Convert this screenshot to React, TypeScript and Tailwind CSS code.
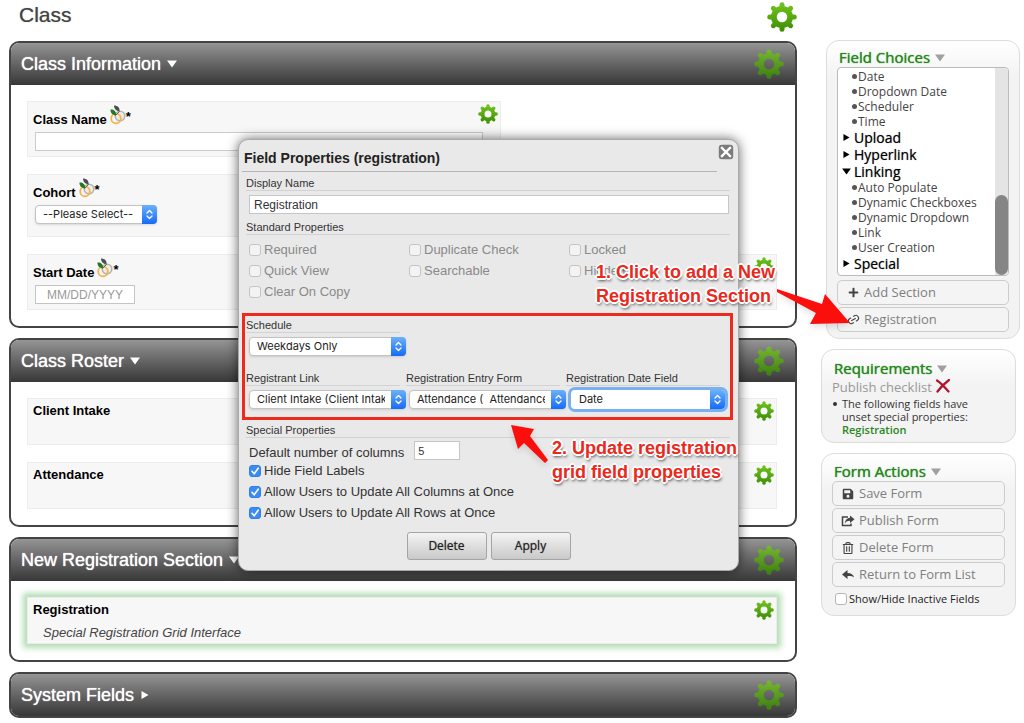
import type { ReactNode } from "react";
import { FaPlus, FaRegTrashAlt, FaSave } from "react-icons/fa";
import { Link2 } from "lucide-react";

const TEETH = [0, 45, 90, 135, 180, 225, 270, 315];

function Gear({ className }: { className: string }) {
  return (
    <svg viewBox="0 0 24 24" className={className} aria-hidden="true">
      <defs>
        <linearGradient id="gear" gradientUnits="userSpaceOnUse" x1="0" y1="2" x2="0" y2="22">
          <stop offset="0" stopColor="#6fc11a" />
          <stop offset="1" stopColor="#3f9106" />
        </linearGradient>
        <mask id="teeth" maskUnits="userSpaceOnUse" x="0" y="0" width="24" height="24">
          <circle cx="12" cy="12" r="6.5" fill="none" stroke="#fff" strokeWidth="4.6" />
          {TEETH.map((a) => (
            <path
              key={a}
              d="M12 5V2.2"
              stroke="#fff"
              strokeWidth="4"
              strokeLinecap="round"
              transform={`rotate(${a} 12 12)`}
            />
          ))}
        </mask>
      </defs>
      <rect width="24" height="24" fill="url(#gear)" mask="url(#teeth)" />
    </svg>
  );
}

function GearButton({ label, className, size }: { label: string; className?: string; size: string }) {
  return (
    <button type="button" aria-label={label} className={className}>
      <Gear className={size} />
    </button>
  );
}

function RingMark() {
  return (
    <svg viewBox="0 0 16 20" className="h-5 w-4 shrink-0" aria-hidden="true">
      <circle cx="10" cy="11" r="4.8" fill="#ecece8" stroke="#b4b4ae" strokeWidth="1.6" />
      <circle cx="6" cy="13.5" r="4.8" fill="none" stroke="#f5b34e" strokeWidth="1.8" />
      <path d="M0.5 4.500C4 4 6.500 6.500 6 10.500C2.500 10 0.200 8 0.5 4.500Z" fill="#1e7a25" />
      <path d="M4 0.500C7.500 0.500 10 2.500 9.500 6.500C6.500 6 4 4 4 0.500Z" fill="#4c4c55" />
      <path d="M5.500 10.500L9.500 6.500" stroke="#555" strokeWidth="0.9" />
    </svg>
  );
}

function ShareIcon() {
  return (
    <svg viewBox="0 0 14 12" className="h-3 w-[14px]" aria-hidden="true">
      <path d="M7 2H1.500V10.500H10V8.500" fill="none" stroke="currentColor" strokeWidth="1.5" />
      <path d="M9 0.500L13.500 4.200L9 8V5.800C6.500 5.800 5 6.500 3.800 8.500C4 5 6 2.900 9 2.700Z" fill="currentColor" />
    </svg>
  );
}

function BackIcon() {
  return (
    <svg viewBox="0 0 14 12" className="h-3 w-[14px]" aria-hidden="true">
      <path d="M6.500 1L1 5.500L6.500 10V7C9.500 6.800 11.500 7.200 13 8.500C12.500 5.500 10 4 6.500 4Z" fill="currentColor" />
    </svg>
  );
}

function Triangle({ dir, className }: { dir: "down" | "right"; className: string }) {
  return (
    <svg viewBox="0 0 10 8" className={className} aria-hidden="true">
      <path d={dir === "down" ? "M0 0.500H10L5 7.500Z" : "M1.500 0L8.500 4L1.500 8Z"} fill="currentColor" />
    </svg>
  );
}

function Section({ title, open = true, children }: { title: string; open?: boolean; children?: ReactNode }) {
  return (
    <section className="overflow-hidden rounded-[10px] border-2 border-[#444] bg-white">
      <header className="flex h-[42px] items-center justify-between bg-linear-to-b from-[#959595] to-[#383838] pr-[11px] pl-[10px]">
        <h2 className="flex items-center gap-[5px] text-lg text-white [text-shadow:0_0_1px_#fff]">
          {title}
          <Triangle dir={open ? "down" : "right"} className="h-2 w-3" />
        </h2>
        <GearButton label={`${title} settings`} size="size-[30px] opacity-80" />
      </header>
      {children && <div className="flex flex-col gap-[17px] py-4 pr-[18px] pl-4">{children}</div>}
    </section>
  );
}

function FieldCard({ title, className, children }: { title: ReactNode; className: string; children?: ReactNode }) {
  return (
    <div className={`flex items-start justify-between border border-[#ececec] bg-[#f7f7f7] px-[5px] ${className}`}>
      <div className="flex min-w-0 flex-1 flex-col">
        {title}
        {children}
      </div>
      <GearButton label="Field settings" className="mt-[2px] -mr-[3px]" size="size-5" />
    </div>
  );
}

function RequiredLabel({ htmlFor, children }: { htmlFor: string; children: string }) {
  return (
    <label htmlFor={htmlFor} className="flex h-[30px] items-start gap-[3px] text-[13px] font-bold text-black">
      <span className="mt-2">{children}</span>
      <span className="mt-[3px] flex">
        <RingMark />
        <span className="mt-[2px]">*</span>
      </span>
    </label>
  );
}

function Select({ id, value, className, focused }: { id: string; value: string; className: string; focused?: boolean }) {
  return (
    <div className={`relative font-['Inter',sans-serif] text-[11px] text-[#222] ${className}`}>
      <select
        id={id}
        className={
          focused
            ? "block h-[19px] w-full appearance-none rounded-[4px] bg-white pr-4 pl-2 ring-3 ring-[#79b0f0] outline-none"
            : "block h-[19px] w-full appearance-none rounded-[4px] border border-[#c3c3c3] bg-white pr-5 pl-[7px] shadow-sm"
        }
      >
        <option>{value}</option>
      </select>
      <svg viewBox="0 0 15 19" className="pointer-events-none absolute top-0 right-0 h-[19px] w-[15px]" aria-hidden="true">
        <defs>
          <linearGradient id="stepper" x1="0" y1="0" x2="0" y2="1">
            <stop offset="0" stopColor="#6bb1fa" />
            <stop offset="1" stopColor="#156bf5" />
          </linearGradient>
        </defs>
        <path d="M0 0H11A4 4 0 0 1 15 4V15A4 4 0 0 1 11 19H0Z" fill="url(#stepper)" />
        <path d="M5 8L7.500 5.500L10 8M5 11L7.500 13.500L10 11" fill="none" stroke="#fff" strokeWidth="1.3" strokeLinecap="round" strokeLinejoin="round" />
      </svg>
    </div>
  );
}

function Group({ title, htmlFor }: { title: string; htmlFor?: string }) {
  const className = "block h-[14px] border-b border-[#d2d2d2] text-[11px] leading-[13px] whitespace-nowrap text-[#333]";
  return htmlFor ? (
    <label htmlFor={htmlFor} className={className}>{title}</label>
  ) : (
    <h3 className={className}>{title}</h3>
  );
}

function Check({ label, checked }: { label: string; checked?: boolean }) {
  return (
    <label className={checked ? "flex h-[21px] items-center gap-[3px] text-[13px] text-[#333]" : "flex h-[21px] items-center gap-[3px] text-[13px] text-[#8a8a8a]"}>
      <span className="relative flex">
        <input
          type="checkbox"
          defaultChecked={checked}
          disabled={!checked}
          className="size-3 appearance-none rounded-[3px] border border-[#c4c4c4] bg-[#f3f3f3] checked:border-[#2f7fe8] checked:bg-[#3b8bf2]"
        />
        {checked && (
          <svg viewBox="0 0 12 12" className="pointer-events-none absolute inset-0 size-3" aria-hidden="true">
            <path d="M3 6.300L5.200 8.800L9.200 3.200" fill="none" stroke="#fff" strokeWidth="1.6" strokeLinecap="round" />
          </svg>
        )}
      </span>
      {label}
    </label>
  );
}

function FieldPropertiesDialog() {
  const button =
    "h-7 w-20 rounded-[3px] border border-[#a5a5a5] bg-linear-to-b from-[#f4f4f4] to-[#c9c9c9] font-['Open_Sans',sans-serif] text-[12px] text-[#222] [text-shadow:0_0_1px_#666]";
  return (
    <div
      role="dialog"
      aria-labelledby="dialog-title"
      className="absolute top-[139px] left-[238px] w-[501px] rounded-[10px] border border-[#a9a9a9] bg-[#e9e9e9] px-[3px] pb-[10px] shadow-[0_0_12px_rgba(0,0,0,0.6)]"
    >
      <header className="flex h-8 items-start justify-between">
        <h2 id="dialog-title" className="mr-[18px] h-8 w-full border-b border-[#b5b5b5] pt-2 pl-[2px] text-[14px] font-bold text-[#222]">
          Field Properties (registration)
        </h2>
        <button type="button" aria-label="Close" className="absolute top-1 right-1">
          <svg viewBox="0 0 16 16" className="size-4">
            <rect x="0.800" y="0.800" width="14.400" height="14.400" rx="3" fill="#7b7b7b" />
            <path d="M4 4L12 12M12 4L4 12" stroke="#fff" strokeWidth="2.400" strokeLinecap="square" />
          </svg>
        </button>
      </header>

      <div className="mt-[5px] pr-[5px] pl-1">
        <Group title="Display Name" htmlFor="display-name" />
        <input
          id="display-name"
          defaultValue="Registration"
          className="mt-1 ml-[3px] block h-[19px] w-[480px] border border-[#c6c6c6] bg-white px-1 text-[12px] text-[#333]"
        />
        <div className="mt-[7px]">
          <Group title="Standard Properties" />
        </div>
        <div className="mt-1 grid grid-cols-[160px_160px_160px] pl-[3px]">
          <Check label="Required" />
          <Check label="Duplicate Check" />
          <Check label="Locked" />
          <Check label="Quick View" />
          <Check label="Searchable" />
          <Check label="Hidden" />
          <Check label="Clear On Copy" />
        </div>
      </div>

      <div className="mt-[11px] mr-[2px] h-[107px] border-3 border-[#ee2a1d] pt-[3px] pl-px">
        <div className="w-[154px]">
          <Group title="Schedule" htmlFor="schedule" />
        </div>
        <Select id="schedule" value="Weekdays Only" className="mt-1 ml-[3px] w-[157px]" />
        <div className="mt-4 grid grid-cols-[160px_160px_160px]">
          <div>
            <div className="w-[154px]"><Group title="Registrant Link" htmlFor="registrant-link" /></div>
            <Select id="registrant-link" value="Client Intake (Client Intake)" className="mt-1 ml-[3px] w-[157px]" />
          </div>
          <div>
            <div className="w-[154px]"><Group title="Registration Entry Form" htmlFor="entry-form" /></div>
            <Select id="entry-form" value={"Attendance (\u00a0 Attendance)"} className="mt-1 ml-[3px] w-[157px]" />
          </div>
          <div>
            <div className="w-[154px]"><Group title="Registration Date Field" htmlFor="date-field" /></div>
            <Select id="date-field" value="Date" focused className="mt-1 ml-[5px] w-[154px]" />
          </div>
        </div>
      </div>

      <div className="mt-1 pr-[5px] pl-1">
        <Group title="Special Properties" />
        <div className="mt-[3px] flex h-[19px] items-start gap-[10px] pl-[3px] text-[13px] text-[#333]">
          <label htmlFor="columns" className="mt-[2px]">Default number of columns</label>
          <input id="columns" defaultValue="5" className="h-[19px] w-[46px] border border-[#c6c6c6] bg-white px-[3px] text-[11px]" />
        </div>
        <div className="pl-[3px]">
          <Check label="Hide Field Labels" checked />
          <Check label="Allow Users to Update All Columns at Once" checked />
          <Check label="Allow Users to Update All Rows at Once" checked />
        </div>
      </div>
      <div className="mt-[9px] flex justify-center gap-1">
        <button type="button" className={button}>Delete</button>
        <button type="button" className={button}>Apply</button>
      </div>
    </div>
  );
}

function Note({ className, children }: { className: string; children: ReactNode }) {
  return (
    <p
      className={`absolute text-[18px] leading-6 font-bold whitespace-nowrap text-[#e8291c] [text-shadow:1px_1px_0_#fff,-1px_-1px_0_#fff,1px_-1px_0_#fff,-1px_1px_0_#fff,2px_0_0_#fff,-2px_0_0_#fff,0_2px_0_#fff,0_-2px_0_#fff,1px_3px_3px_rgba(0,0,0,0.7)] ${className}`}
    >
      {children}
    </p>
  );
}

function Panel({ title, className, children }: { title: string; className: string; children: ReactNode }) {
  return (
    <section className={`rounded-[13px] border border-[#dcdcd8] bg-linear-to-b from-white to-[#f3f3f3] to-[36px] px-[10px] ${className}`}>
      <h2 className="flex h-[19px] items-center gap-1 pl-[2px] text-[15px] text-[#27861d] [text-shadow:0_0_1px_#27861d]">
        {title}
        <Triangle dir="down" className="h-2 w-3 text-[#a0a0a0]" />
      </h2>
      {children}
    </section>
  );
}

function PanelButton({ icon, children }: { icon: ReactNode; children: string }) {
  return (
    <button
      type="button"
      className="flex h-[25px] w-full items-center gap-1 rounded-[5px] border border-[#ccc] bg-[#f4f4f4] pl-2 text-[13px] text-[#808080] [&_svg]:text-[#444]"
    >
      <span className="flex w-[14px] justify-center">{icon}</span>
      {children}
    </button>
  );
}

function Choice({ children }: { children: string }) {
  return (
    <li className="flex h-[15px] items-center text-[12px] leading-[15px] text-[#444]">
      <span className="mr-px size-[5px] rounded-full bg-[#555]" />
      {children}
    </li>
  );
}

function Category({ title, open, items = [] }: { title?: string; open?: boolean; items?: string[] }) {
  return (
    <li>
      {title && (
        <div className="flex h-[17px] items-center gap-[3px] pl-1 text-[14px] leading-[17px] text-black [text-shadow:0_0_1px_#777]">
          <Triangle dir={open ? "down" : "right"} className="h-[7px] w-[9px]" />
          {title}
        </div>
      )}
      <ul className="pl-[14px]">
        {items.map((item) => (
          <Choice key={item}>{item}</Choice>
        ))}
      </ul>
    </li>
  );
}

function Sidebar() {
  return (
    <aside className="flex w-[199px] shrink-0 flex-col gap-[10px] pt-10 font-['Open_Sans',sans-serif]">
      <Panel title="Field Choices" className="ml-[5px] pt-[7px] pb-[6px]">
        <div className="mb-1 flex overflow-hidden rounded-[4px] border border-[#bbb] bg-white">
          <ul className="flex-1 pt-px pb-[3px]">
            <Category items={["Date", "Dropdown Date", "Scheduler", "Time"]} />
            <Category title="Upload" />
            <Category title="Hyperlink" />
            <Category
              title="Linking"
              open
              items={["Auto Populate", "Dynamic Checkboxes", "Dynamic Dropdown", "Link", "User Creation"]}
            />
            <Category title="Special" />
          </ul>
          <div className="flex w-[13px] flex-col justify-end bg-[#e4e4e4]">
            <div className="h-20 rounded-full bg-[#858585]" />
          </div>
        </div>
        <div className="flex flex-col gap-[2px]">
          <PanelButton icon={<FaPlus size={11} />}>Add Section</PanelButton>
          <PanelButton icon={<Link2 size={13} strokeWidth={2} className="-rotate-30" />}>Registration</PanelButton>
        </div>
      </Panel>

      <Panel title="Requirements" className="mr-1 pt-[9px] pb-[6px]">
        <p className="flex h-[19px] items-center gap-1 text-[13px] text-[#999]">
          Publish checklist
          <svg viewBox="0 0 14 14" className="mb-1 size-[14px]" aria-hidden="true">
            <path d="M1 1.500C5 4 9 8.500 12.500 12.500M13 1C9 4 4 9 1.500 12.500" fill="none" stroke="#b3122c" strokeWidth="2.200" strokeLinecap="round" />
          </svg>
        </p>
        <ul className="pr-4 text-[11px] leading-[13px] text-[#333]">
          <li className="flex gap-[5px] pl-px">
            <span className="mt-[5px] size-1 shrink-0 rounded-full bg-[#333]" />
            <span>
              The following fields have unset special properties:{" "}
              <a href="#registration" className="block font-semibold text-[#27861d]">Registration</a>
            </span>
          </li>
        </ul>
      </Panel>

      <Panel title="Form Actions" className="mr-1 pt-2 pb-2">
        <div className="flex flex-col gap-[2px]">
          <PanelButton icon={<FaSave size={12} />}>Save Form</PanelButton>
          <PanelButton icon={<ShareIcon />}>Publish Form</PanelButton>
          <PanelButton icon={<FaRegTrashAlt size={12} />}>Delete Form</PanelButton>
          <PanelButton icon={<BackIcon />}>Return to Form List</PanelButton>
        </div>
        <label className="mt-1 flex h-4 items-center gap-[2px] pl-[3px] text-[11px] text-[#222]">
          <input type="checkbox" className="size-3 appearance-none rounded-[3px] border border-[#b5b5b5] bg-white" />
          Show/Hide Inactive Fields
        </label>
      </Panel>
    </aside>
  );
}

export default function App() {
  return (
    <div className="relative flex min-h-screen gap-6 bg-white pr-1 pl-[9px] font-['Liberation_Sans',Arial,sans-serif]">
      <main className="flex min-w-0 flex-1 flex-col gap-[10px] pb-1">
        <header className="-mb-[10px] flex h-[41px] items-start justify-between pt-[2px] pl-[10px]">
          <h1 className="text-[21px] leading-[26px] text-[#444] [text-shadow:0_0_1px_#888]">Class</h1>
          <GearButton label="Form settings" size="size-[30px]" />
        </header>

        <Section title="Class Information">
          <FieldCard
            className="h-14 w-[474px]"
            title={<RequiredLabel htmlFor="class-name">Class Name</RequiredLabel>}
          >
            <input id="class-name" className="ml-[2px] h-[19px] w-[448px] shrink-0 border border-[#ccc] bg-white" />
          </FieldCard>
          <FieldCard
            className="h-[63px] w-[474px]"
            title={<RequiredLabel htmlFor="cohort">Cohort</RequiredLabel>}
          >
            <Select id="cohort" value="--Please Select--" className="ml-[2px] w-[122px]" />
          </FieldCard>
          <FieldCard
            className="h-14"
            title={<RequiredLabel htmlFor="start-date">Start Date</RequiredLabel>}
          >
            <input
              id="start-date"
              placeholder="MM/DD/YYYY"
              className="ml-[2px] h-[19px] w-[100px] border border-[#c4c4c4] bg-white text-center text-[12px] placeholder:text-[#999]"
            />
          </FieldCard>
        </Section>

        <Section title="Class Roster">
          <FieldCard className="h-[47px]" title={<h3 className="mt-[2px] text-[13px] font-bold">Client Intake</h3>} />
          <FieldCard className="h-[47px]" title={<h3 className="mt-[2px] text-[13px] font-bold">Attendance</h3>} />
        </Section>

        <Section title="New Registration Section">
          <FieldCard
            className="h-[47px] shadow-[0_0_6px_4px_#b4dcb4]"
            title={<h3 className="mt-[2px] text-[13px] font-bold">Registration</h3>}
          >
            <p className="mt-1 pl-[10px] text-[13px] leading-[18px] text-[#444] italic">Special Registration Grid Interface</p>
          </FieldCard>
        </Section>

        <Section title="System Fields" open={false} />
      </main>

      <Sidebar />

      <FieldPropertiesDialog />

      <Note className="top-[260px] left-[596px]">
        1. Click to add a New
        <br />
        Registration Section
      </Note>
      <Note className="top-[436px] left-[552px]">
        2. Update registration
        <br />
        grid field properties
      </Note>
      <svg viewBox="0 0 76 40" className="absolute top-[288px] left-[776px] h-10 w-[76px] drop-shadow-md" aria-hidden="true">
        <path d="M1 1L46 16L49 6L74 35L34 36L40 25L1 4Z" fill="#fb0f0c" />
      </svg>
      <svg viewBox="0 0 40 42" className="absolute top-[424px] left-[510px] h-[42px] w-10 drop-shadow-md" aria-hidden="true">
        <path d="M1 1L24 5L20 12L38 36L35 39L14 19L8 25Z" fill="#fb0f0c" />
      </svg>
    </div>
  );
}
